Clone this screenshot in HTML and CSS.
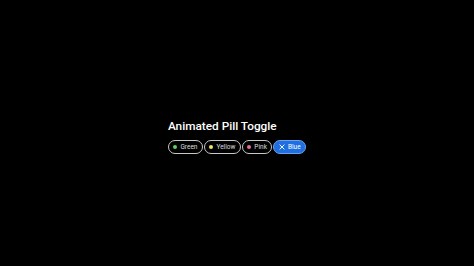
FILE: index.html
```html
<!DOCTYPE html>
<html lang="en">
  <head>
    <meta charset="UTF-8" />
    <meta name="viewport" content="width=device-width, initial-scale=1.0" />
    <title>Animated Pill Toggle</title>
    <link rel="stylesheet" href="styles.css">
  </head>
  <body>
    <div class="stage">
      <div class="demo">
        <h1 class="title">Animated Pill Toggle</h1>
        <div class="pills">
          <button class="pill"><span class="dot dot-green"></span>Green</button>
          <button class="pill"><span class="dot dot-yellow"></span>Yellow</button>
          <button class="pill"><span class="dot dot-pink"></span>Pink</button>
          <button class="pill active">
            <svg class="x-icon" viewBox="0 0 10 10" width="6" height="6">
              <path d="M1.5 1.5 L8.5 8.5 M8.5 1.5 L1.5 8.5" stroke="#fff" stroke-width="1.6" stroke-linecap="round" />
            </svg>Blue</button>
        </div>
      </div>
    </div>
  </body>
</html>
```

FILE: styles.css
```css
body {
  margin: 0;
  background-color: #000;
  font-family: Roboto, "Liberation Sans", sans-serif;
}

.stage {
  width: 474px;
  height: 266px;
  display: flex;
  align-items: center;
  justify-content: center;
}

.demo {
  margin-top: 6px;
}

.title {
  margin: 0 0 6px 0;
  color: #fff;
  font-size: 11.8px;
  font-weight: 500;
  line-height: 16px;
}

.pills {
  display: flex;
  gap: 1px;
}

.pill {
  display: flex;
  align-items: center;
  gap: 3px;
  height: 14px;
  padding: 0 4.5px;
  background-color: #000;
  color: #ddd;
  border: 1px solid #c8c8c8;
  border-radius: 8px;
  font-family: Roboto, "Liberation Sans", sans-serif;
  font-size: 6.5px;
  cursor: pointer;
}

.pill.active {
  background-color: #1f6fe0;
  border-color: #6aa3f0;
  color: #fff;
}

.dot {
  width: 4px;
  height: 4px;
  border-radius: 50%;
}

.dot-green {
  background-color: #5fcf5f;
}

.dot-yellow {
  background-color: #f2e16a;
}

.dot-pink {
  background-color: #e86f95;
}

.x-icon {
  display: block;
}
```
